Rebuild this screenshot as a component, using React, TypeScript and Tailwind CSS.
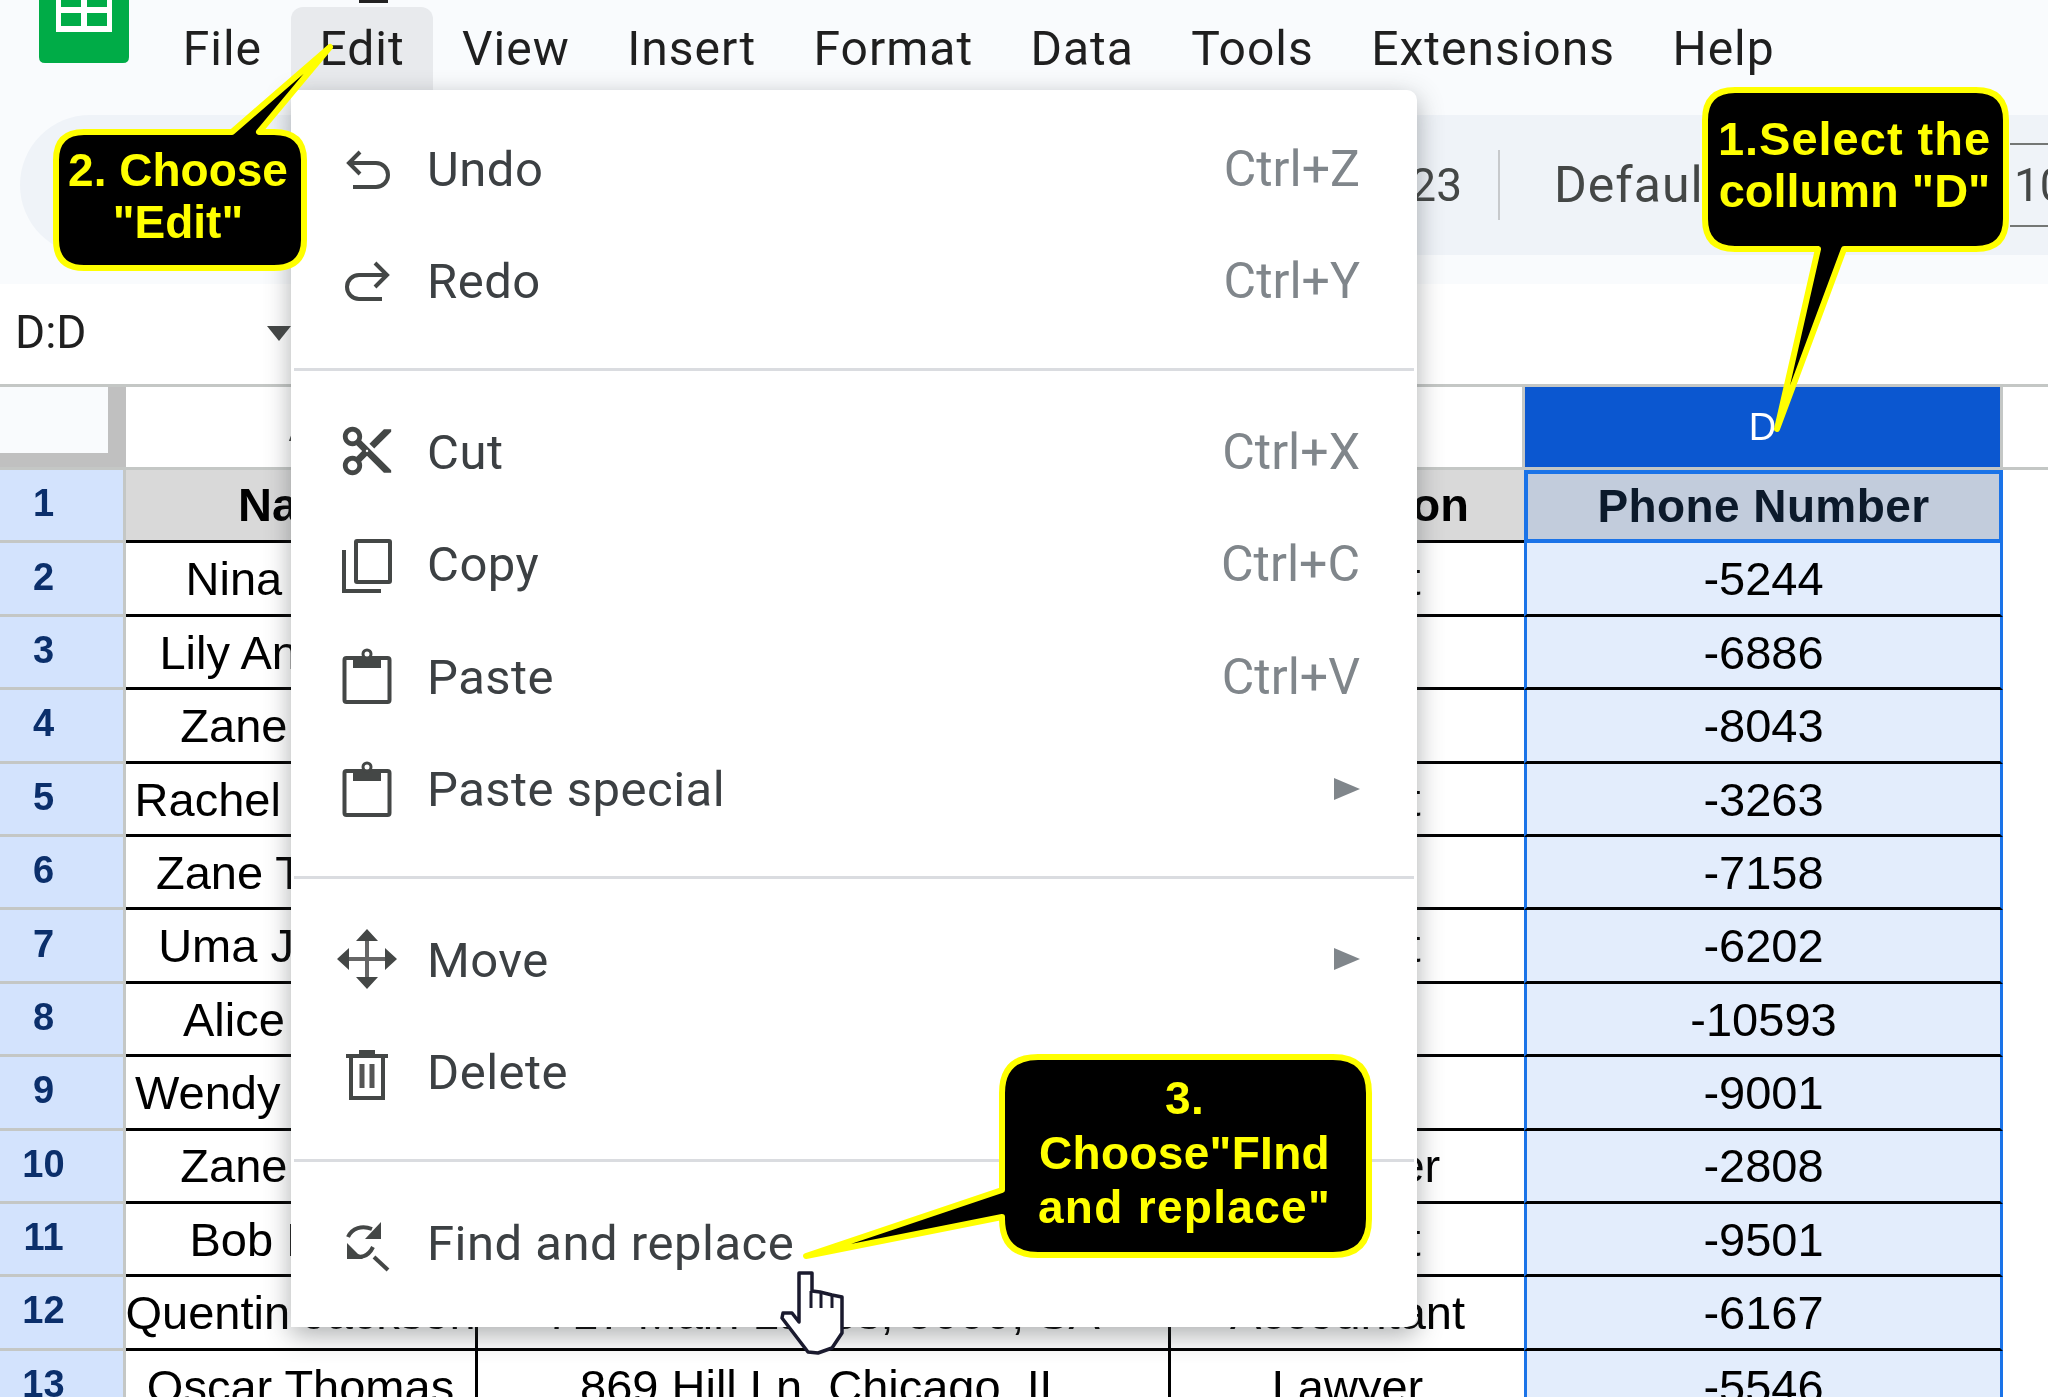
import React from "react";

const menuBar = ["File", "Edit", "View", "Insert", "Format", "Data", "Tools", "Extensions", "Help"];

type Row = { name: string; address: string; job: string; phone: string };

const rows: Row[] = [
  { name: "Nina Lewis", address: "123 Oak St, Dallas, TX", job: "Dentist", phone: "-5244" },
  { name: "Lily Anderson", address: "456 Pine Rd, Miami, FL", job: "Doctor", phone: "-6886" },
  { name: "Zane Lewis", address: "789 Elm Ave, Reno, NV", job: "Doctor", phone: "-8043" },
  { name: "Rachel Jackson", address: "321 Lake Dr, Boise, ID", job: "Dentist", phone: "-3263" },
  { name: "Zane Thomas", address: "654 Hill Ln, Tulsa, OK", job: "Doctor", phone: "-7158" },
  { name: "Uma Jackson", address: "987 Main St, Mesa, AZ", job: "Dentist", phone: "-6202" },
  { name: "Alice Lewis", address: "159 Oak St, Omaha, NE", job: "Doctor", phone: "-10593" },
  { name: "Wendy Jackson", address: "753 Pine Rd, Salem, OR", job: "Doctor", phone: "-9001" },
  { name: "Zane Lewis", address: "852 Elm Ave, Provo, UT", job: "Manager", phone: "-2808" },
  { name: "Bob Harris", address: "951 Lake Dr, Akron, OH", job: "Dentist", phone: "-9501" },
  { name: "Quentin Jackson", address: "717 Main Lanes, 5000, SA", job: "Accountant", phone: "-6167" },
  { name: "Oscar Thomas", address: "869 Hill Ln, Chicago, IL", job: "Lawyer", phone: "-5546" },
];

const ink = "#444746";

function Icon({ children }: { children: React.ReactNode }) {
  return (
    <svg width="58" height="58" viewBox="0 0 58 58" fill="none" stroke={ink} strokeWidth="4" className="shrink-0 overflow-visible">
      {children}
    </svg>
  );
}

const UndoIcon = () => (
  <Icon>
    <path d="M22 13 L11 24 L22 35 M11 24 H38 A12 12 0 0 1 38 48 H15" />
  </Icon>
);
const RedoIcon = () => (
  <Icon>
    <path d="M37 11 L49 23 L37 35 M49 23 H21 A12 12 0 0 0 21 47 H44" />
  </Icon>
);
const CutIcon = () => (
  <svg width="58" height="58" viewBox="0 0 24 24" fill={ink} className="shrink-0">
    <path d="M9.64 7.64c.23-.5.36-1.05.36-1.64 0-2.21-1.79-4-4-4S2 3.79 2 6s1.79 4 4 4c.59 0 1.14-.13 1.64-.36L10 12l-2.36 2.36C7.14 14.13 6.59 14 6 14c-2.21 0-4 1.79-4 4s1.79 4 4 4 4-1.79 4-4c0-.59-.13-1.14-.36-1.64L12 14l7 7h3v-1L9.64 7.64zM6 8c-1.1 0-2-.89-2-2s.9-2 2-2 2 .89 2 2-.9 2-2 2zm0 12c-1.1 0-2-.89-2-2s.9-2 2-2 2 .89 2 2-.9 2-2 2zm6-7.5c-.28 0-.5-.22-.5-.5s.22-.5.5-.5.5.22.5.5-.22.5-.5.5zM19 3l-6 6 2 2 7-7V3z" />
  </svg>
);
const CopyIcon = () => (
  <Icon>
    <rect x="18" y="6" width="34" height="41" rx="1" />
    <path d="M6 15 V56 H43" />
  </Icon>
);
const PasteIcon = () => (
  <Icon>
    <rect x="6.5" y="11" width="45" height="44" rx="2" />
    <path d="M15 11 H43 V21 H15 Z" fill={ink} stroke="none" />
    <circle cx="29" cy="7" r="4" fill="#fff" strokeWidth="3" />
  </Icon>
);
const MoveIcon = () => (
  <Icon>
    <path d="M29 8 V50 M8 29 H50" stroke="#666" />
    <path d="M29 -1 L40 11 H18 Z M29 59 L40 47 H18 Z M-1 29 L11 18 V40 Z M59 29 L47 18 V40 Z" fill={ink} stroke="none" />
  </Icon>
);
const DeleteIcon = () => (
  <Icon>
    <path d="M8 13 H50 M21 9 H37" />
    <path d="M13 15 V55 H45 V15" />
    <path d="M24 21 V45 M34 21 V45" strokeWidth="5" stroke="#555" />
  </Icon>
);
const FindIcon = () => (
  <Icon>
    <path d="M10 24 C14 15 24 12 34 16" />
    <path d="M43 9 V26 H27 Z" fill={ink} stroke="none" />
    <path d="M9 30 V46 H25 Z" fill={ink} stroke="none" />
    <path d="M15 41 C22 46 30 44 35 34" />
    <path d="M36 44 L50 57" />
  </Icon>
);

const SubArrow = () => (
  <svg width="26" height="22" viewBox="0 0 26 22" fill="#80868b">
    <path d="M0 0 L26 11 L0 22 Z" />
  </svg>
);

function MenuRow({ icon, label, hint, sub }: { icon: React.ReactNode; label: string; hint?: string; sub?: boolean }) {
  return (
    <div className="flex h-[112.5px] items-center pl-[47px] pr-[57px]">
      {icon}
      <span className="ml-[31px] pt-[2px] text-[49px] tracking-[0.5px] text-[#3c4043]">{label}</span>
      {hint && <span className="ml-auto pt-[2px] text-[50px] text-[#80868b]">{hint}</span>}
      {sub && <span className="ml-auto flex"><SubArrow /></span>}
    </div>
  );
}

const MenuSep = () => <div className="mx-[3px] mb-[24px] mt-[31px] h-[3px] bg-[#dadce0]" />;

function EditMenu() {
  return (
    <div className="absolute left-[291px] top-[90px] w-[1126px] rounded-r-[10px] bg-white pb-[28px] pt-[22px] shadow-[0_8px_26px_rgba(60,64,67,0.42)]">
      <MenuRow icon={<UndoIcon />} label="Undo" hint="Ctrl+Z" />
      <MenuRow icon={<RedoIcon />} label="Redo" hint="Ctrl+Y" />
      <MenuSep />
      <MenuRow icon={<CutIcon />} label="Cut" hint="Ctrl+X" />
      <MenuRow icon={<CopyIcon />} label="Copy" hint="Ctrl+C" />
      <MenuRow icon={<PasteIcon />} label="Paste" hint="Ctrl+V" />
      <MenuRow icon={<PasteIcon />} label="Paste special" sub />
      <MenuSep />
      <MenuRow icon={<MoveIcon />} label="Move" sub />
      <MenuRow icon={<DeleteIcon />} label="Delete" />
      <MenuSep />
      <MenuRow icon={<FindIcon />} label="Find and replace" />
    </div>
  );
}

function Logo() {
  return (
    <svg width="90" height="63" viewBox="0 0 90 63" className="shrink-0">
      <path d="M0 0 H90 V57 Q90 63 84 63 H6 Q0 63 0 57 Z" fill="#00ac47" />
      <path d="M17 0 H73 V32 H17 Z" fill="#fff" />
      <path d="M22 0 H42 V7 H22 Z M48 0 H68 V7 H48 Z M22 13 H42 V26 H22 Z M48 13 H68 V26 H48 Z" fill="#00ac47" />
    </svg>
  );
}

function Header() {
  return (
    <div className="h-[284px] bg-[#f9fbfd]">
      <div className="flex h-[115px] items-start pl-[39px]">
        <Logo />
        <div className="ml-[25px] mt-[7px] flex text-[#1f1f1f]">
          {menuBar.map((m) => (
            <div
              key={m}
              className={`flex h-[83px] items-center rounded-t-[12px] px-[28.7px] text-[48px] tracking-[1px] ${m === "Edit" ? "bg-[#e8eaed]" : ""}`}
            >
              {m}
            </div>
          ))}
        </div>
      </div>
      <div className="ml-[20px] flex h-[140px] items-center justify-end rounded-l-[70px] bg-[#eff3f8] text-[46px] text-[#444746]">
        <span>123</span>
        <div className="ml-[36px] h-[70px] w-[2px] bg-[#c7c9cc]" />
        <span className="ml-[54px] w-[154px] whitespace-nowrap text-[50px] tracking-[1px]">Default</span>
        <div className="ml-[302px] flex h-[84px] w-[38px] items-center overflow-hidden border-y-[2px] border-[#747775] pl-[4px]">
          10
        </div>
      </div>
    </div>
  );
}

function FormulaBar() {
  return (
    <div className="flex h-[100px] items-center bg-white pb-[3px] pl-[15px]">
      <span className="w-[252px] text-[46px] text-[#1f1f1f]">D:D</span>
      <svg width="24" height="15" viewBox="0 0 24 15" fill={ink} className="mt-[2px]">
        <path d="M0 0 H24 L12 15 Z" />
      </svg>
    </div>
  );
}

function ColumnHeader() {
  const letter = "flex items-center justify-center text-[40px] text-[#444746]";
  return (
    <div className="flex h-[86px] border-y-[3px] border-[#c4c7c5] bg-white">
      <div className="h-full w-[126px] shrink-0 bg-[#c0c0c0]">
        <div className="h-[66px] w-[108px] bg-[#f9fbfd]" />
      </div>
      <div className={`w-[352px] shrink-0 ${letter}`}>A</div>
      <div className={`w-[693px] shrink-0 ${letter}`}>B</div>
      <div className={`w-[354px] shrink-0 border-r-[3px] border-[#c4c7c5] ${letter}`}>C</div>
      <div className="flex w-[475px] shrink-0 items-center justify-center bg-[#0b57d0] text-[38px] text-white">D</div>
      <div className="w-[3px] shrink-0 bg-[#c4c7c5]" />
    </div>
  );
}

function RowNumber({ n }: { n: number }) {
  return (
    <div className="flex h-full w-[126px] shrink-0 border-b-[3px] border-r-[3px] border-[#c4c7c5] bg-[#d3e3fd]">
      <span className="flex w-[87px] items-center justify-center pb-[3px] text-[38px] font-bold text-[#0b2f6b]">{n}</span>
    </div>
  );
}

function TitleRow() {
  const cell = "flex shrink-0 items-center justify-center whitespace-nowrap border-b-[3px] border-black pt-[1px]";
  return (
    <div className="flex h-[73.4px] text-[47px] font-bold text-black">
      <RowNumber n={1} />
      <div className={`w-[352px] bg-[#d9d9d9] ${cell}`}>Name</div>
      <div className={`w-[693px] bg-[#d9d9d9] ${cell}`}>Address</div>
      <div className={`w-[353px] bg-[#d9d9d9] ${cell}`}>Profession</div>
      <div className="flex w-[479px] shrink-0 items-center justify-center border-[4px] border-[#1a73e8] bg-[#c2ccdc] text-[46px] tracking-[0.4px] text-[#0c1a2b]">
        Phone Number
      </div>
    </div>
  );
}

function DataRow({ row, n }: { row: Row; n: number }) {
  const cell = "flex shrink-0 items-center justify-center overflow-hidden whitespace-nowrap border-b-[3px] border-black pt-[2px]";
  return (
    <div className="flex h-[73.4px] text-[47px] text-black">
      <RowNumber n={n} />
      <div className={`w-[352px] border-r-[3px] ${cell}`}>{row.name}</div>
      <div className={`w-[693px] border-r-[3px] ${cell}`}>{row.address}</div>
      <div className={`w-[353px] ${cell}`}>{row.job}</div>
      <div className={`w-[479px] border-x-[3px] border-x-[#1a73e8] bg-[#e3edfc] ${cell}`}>{row.phone}</div>
    </div>
  );
}

function Callout({
  className,
  w,
  h,
  d,
  textClass,
  lines,
}: {
  className: string;
  w: number;
  h: number;
  d: string;
  textClass: string;
  lines: string[];
}) {
  return (
    <div className={`absolute ${className}`}>
      <svg width={w} height={h} viewBox={`0 0 ${w} ${h}`} className="block overflow-visible">
        <path d={d} fill="#000" stroke="#ffff00" strokeWidth="6" strokeLinejoin="round" />
      </svg>
      <div className={`absolute whitespace-nowrap text-center font-bold text-[#ffff00] ${textClass}`}>
        {lines.map((l) => (
          <div key={l}>{l}</div>
        ))}
      </div>
    </div>
  );
}

function HandCursor() {
  return (
    <svg width="70" height="88" viewBox="0 0 70 88" className="absolute left-[780px] top-[1270px]">
      <path
        d="M19 52 V3 H32 V21 L40 22 L52 25 L62 27 V63 L52 78 L38 83 L28 82 L2 48 L3 43 H12 Z"
        fill="#fff"
        stroke="#1a1a2e"
        strokeWidth="3.5"
        strokeLinejoin="round"
      />
      <path d="M31 21 V38 M41 23 V38 M52 26 V38" fill="none" stroke="#1a1a2e" strokeWidth="3" />
    </svg>
  );
}

export default function App() {
  return (
    <div className="relative h-[1397px] w-[2048px] overflow-hidden bg-white font-['Liberation_Sans',Arial,sans-serif] blur-[0.7px]">
      <div className="font-['Roboto',sans-serif]">
        <Header />
        <FormulaBar />
      </div>
      <ColumnHeader />
      <TitleRow />
      {rows.map((row, i) => (
        <DataRow key={i} row={row} n={i + 2} />
      ))}

      <div className="absolute left-[359px] top-0 h-[3px] w-[29px] bg-[#222]" />

      <div className="font-['Roboto',sans-serif]">
        <EditMenu />
      </div>

      <Callout
        className="left-[48px] top-[40px]"
        w={290}
        h={235}
        d="M36 92 H184 L282 7 L211 92 H226 Q256 92 256 120 V200 Q256 228 226 228 H36 Q8 228 8 200 V120 Q8 92 36 92 Z"
        textClass="left-[7px] top-[104px] w-[246px] text-[46px] leading-[52px]"
        lines={["2. Choose", '"Edit"']}
      />
      <Callout
        className="left-[1695px] top-[80px]"
        w={320}
        h={360}
        d="M40 10 H281 Q311 10 311 40 V139 Q311 169 281 169 H149 L82 349 L123 169 H40 Q10 169 10 139 V40 Q10 10 40 10 Z"
        textClass="left-[9px] top-[33px] w-[301px] text-[47px] leading-[52px] [&>div:first-child]:tracking-[1px]"
        lines={["1.Select the", 'collumn "D"']}
      />
      <Callout
        className="left-[795px] top-[1045px]"
        w={590}
        h={225}
        d="M243 12 H538 Q574 12 574 48 V174 Q574 210 538 210 H243 Q207 210 207 174 L207 172 L11 211 L207 145 V48 Q207 12 243 12 Z"
        textClass="left-[206px] top-[26px] w-[367px] text-[46px] leading-[54.5px] tracking-[0.3px] [&>div:last-child]:tracking-[1.3px]"
        lines={["3.", 'Choose"FInd', 'and replace"']}
      />

      <HandCursor />
    </div>
  );
}
